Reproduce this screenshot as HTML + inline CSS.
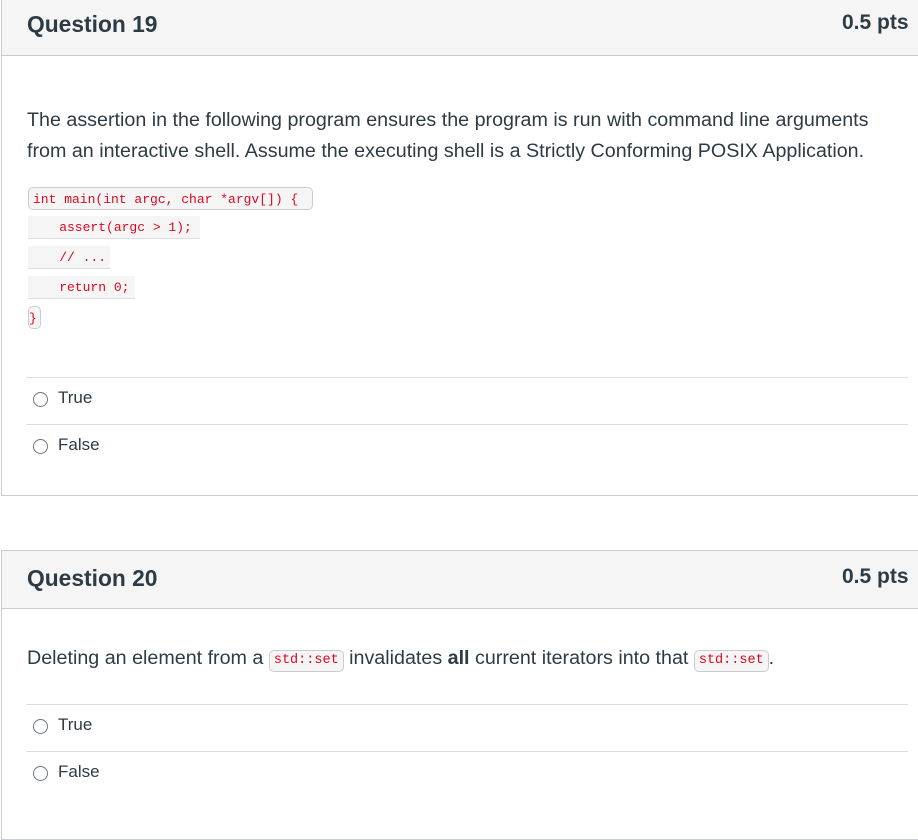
<!DOCTYPE html>
<html><head><style>
body{margin:0;width:918px;height:822px;background:#fff;font-family:"Liberation Sans",sans-serif;color:#2d3b45;position:relative;overflow:hidden}
.box{position:absolute;left:1px;width:930px;border:1px solid #c7cdd1;box-sizing:border-box}
.hd{position:absolute;left:0;right:0;top:0;background:#f5f5f5;border-bottom:1px solid #c7cdd1}
.t{position:absolute;font-weight:bold;font-size:22.8px;color:#2d3b45}
.a{position:absolute;font-size:19.7px;line-height:31px;white-space:nowrap}
code,.c{font-family:"Liberation Mono",monospace;color:#e0061f;font-size:13px}
.c{position:absolute;left:28px;height:23px;line-height:23px;background:#f5f5f5;border-bottom:1px solid #ddd;white-space:pre;box-sizing:border-box}
.sep{position:absolute;left:26px;width:882px;border-top:1px solid #dcdfe2}
.r{position:absolute;left:33px;width:13px;height:13px;border:1px solid #6b7780;border-radius:50%}
.l{position:absolute;left:58px;font-size:17px}
.ic{display:inline-block;background:#f5f5f5;border:1px solid #ccc;border-radius:5px;padding:1px 4px;line-height:18px;vertical-align:1px;font-size:13.5px}
</style></head><body>
<div class="box" style="top:-1px;height:497px">
<div class="hd" style="height:55px"></div>
<div class="t" style="left:25px;top:11px">Question 19</div>
<div class="t" style="left:840px;top:11px;font-size:21px">0.5 pts</div>
</div>
<div class="a" style="left:27px;top:105px">The assertion in the following program ensures the program is run with command line arguments<br>from an interactive shell. Assume the executing shell is a Strictly Conforming POSIX Application.</div>
<div class="c" style="top:187px;width:285px;border:1px solid #ccc;border-radius:5px;padding-left:4px">int main(int argc, char *argv[]) {</div>
<div class="c" style="top:216px;width:172px">    assert(argc &gt; 1);</div>
<div class="c" style="top:246px;width:82px">    // ...</div>
<div class="c" style="top:276px;width:107px">    return 0;</div>
<div class="c" style="top:306px;width:13px;border:1px solid #ccc;border-radius:5px;background:#f5f5f5">}</div>
<div class="sep" style="top:377px"></div>
<div class="r" style="top:392px"></div><div class="l" style="top:388px">True</div>
<div class="sep" style="top:424px"></div>
<div class="r" style="top:439px"></div><div class="l" style="top:435px">False</div>

<div class="box" style="top:550px;height:290px">
<div class="hd" style="height:57px"></div>
<div class="t" style="left:25px;top:14px">Question 20</div>
<div class="t" style="left:840px;top:14px;font-size:21px">0.5 pts</div>
</div>
<div class="a" style="left:27px;top:643px">Deleting an element from a <code class="ic">std::set</code> invalidates <b>all</b> current iterators into that <code class="ic">std::set</code>.</div>
<div class="sep" style="top:704px"></div>
<div class="r" style="top:719px"></div><div class="l" style="top:715px">True</div>
<div class="sep" style="top:751px"></div>
<div class="r" style="top:766px"></div><div class="l" style="top:762px">False</div>
</body></html>
